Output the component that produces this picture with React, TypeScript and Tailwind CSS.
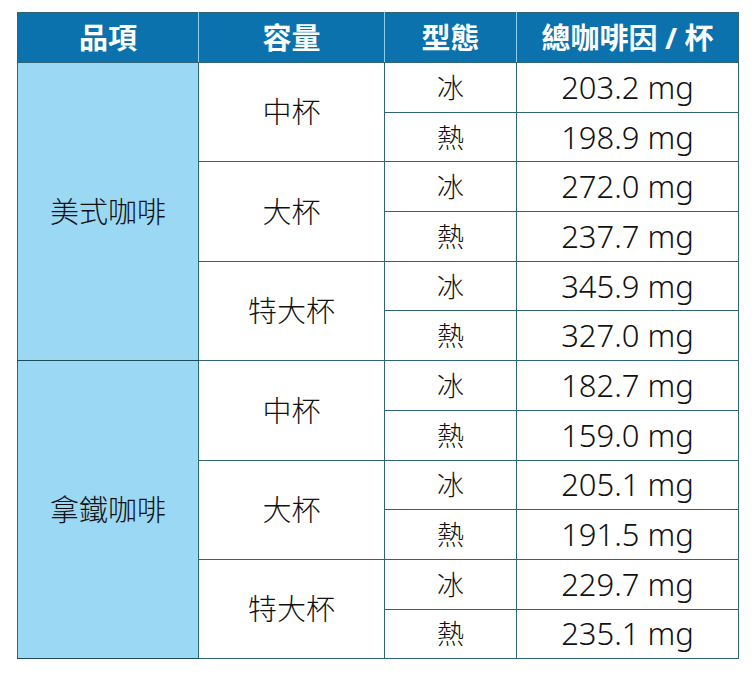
const groups = [
  {
    name: "美式咖啡",
    sizes: [
      { size: "中杯", ice: "203.2 mg", hot: "198.9 mg" },
      { size: "大杯", ice: "272.0 mg", hot: "237.7 mg" },
      { size: "特大杯", ice: "345.9 mg", hot: "327.0 mg" },
    ],
  },
  {
    name: "拿鐵咖啡",
    sizes: [
      { size: "中杯", ice: "182.7 mg", hot: "159.0 mg" },
      { size: "大杯", ice: "205.1 mg", hot: "191.5 mg" },
      { size: "特大杯", ice: "229.7 mg", hot: "235.1 mg" },
    ],
  },
];

const cell = "border border-[#2f6477] text-center align-middle p-0 font-light";

export default function App() {
  return (
    <div
      className="w-[755px] h-[676px] bg-white pt-[12px] pl-[17px]"
      style={{ fontFamily: '"Noto Sans", "Noto Sans CJK TC", sans-serif' }}
    >
      <table className="border-collapse table-fixed w-[721px] text-[#111]">
        <colgroup>
          <col className="w-[181px]" />
          <col className="w-[186px]" />
          <col className="w-[132px]" />
          <col className="w-[222px]" />
        </colgroup>
        <thead>
          <tr className="h-[50px] bg-[#0b72ad] text-white text-[29px] font-bold leading-none">
            <th className="border border-[#2f6477] border-r-[#8fcfee] p-0">品項</th>
            <th className="border border-[#2f6477] border-r-[#8fcfee] p-0">容量</th>
            <th className="border border-[#2f6477] border-r-[#8fcfee] p-0">型態</th>
            <th className="border border-[#2f6477] p-0">總咖啡因 / 杯</th>
          </tr>
        </thead>
        <tbody>
          {groups.map((g) =>
            g.sizes.map((s, si) => (
              <>
                <tr key={g.name + s.size + "i"} className="h-[49.7px]">
                  {si === 0 && (
                    <td
                      rowSpan={6}
                      className={`${cell} bg-[#9bd8f4] text-[29px] border-b-[#1d4a5c]`}
                    >
                      {g.name}
                    </td>
                  )}
                  <td rowSpan={2} className={`${cell} text-[29px]`}>
                    {s.size}
                  </td>
                  <td className={`${cell} text-[27px] leading-none`}>冰</td>
                  <td className={`${cell} text-[31px] leading-none`}>{s.ice}</td>
                </tr>
                <tr key={g.name + s.size + "h"} className="h-[49.7px]">
                  <td className={`${cell} text-[27px] leading-none`}>熱</td>
                  <td className={`${cell} text-[31px] leading-none`}>{s.hot}</td>
                </tr>
              </>
            ))
          )}
        </tbody>
      </table>
    </div>
  );
}
